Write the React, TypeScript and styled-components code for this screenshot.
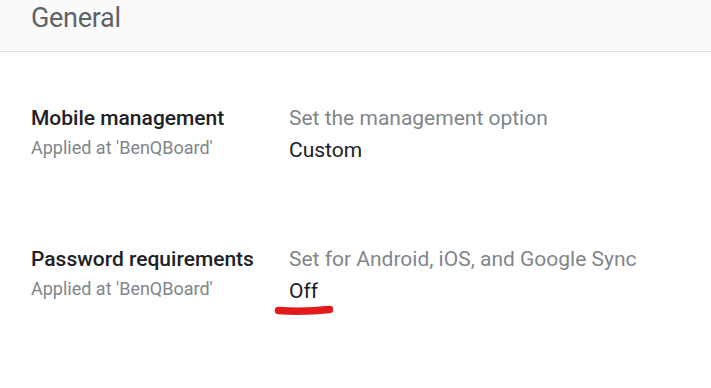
import React from 'react';
import styled, {createGlobalStyle} from 'styled-components';

const GlobalStyle = createGlobalStyle`
  html, body {
    margin: 0;
    padding: 0;
    background: #ffffff;
    font-family: Roboto, "Liberation Sans", Arial, sans-serif;
  }
`;

const Page = styled.div`
  width: 711px;
  height: 388px;
  overflow: hidden;
  background: #ffffff;
`;

const Header = styled.div`
  height: 52px;
  box-sizing: border-box;
  padding: 0 31px;
  background: #fafafa;
  border-bottom: 1px solid #e0e0e0;
`;

const HeaderTitle = styled.h1`
  margin: 0;
  padding-top: 2px;
  font-size: 27px;
  font-weight: 400;
  line-height: 32px;
  color: #5f6368;
  letter-spacing: -0.3px;
`;

const Settings = styled.div`
  display: flex;
  flex-direction: column;
  gap: 85px;
  padding: 54px 31px 0;
`;

const Row = styled.div`
  display: grid;
  grid-template-columns: 258px 1fr;
`;

const Label = styled.div`
  display: flex;
  flex-direction: column;
  gap: 8px;
`;

const Name = styled.div`
  font-size: 21px;
  font-weight: 500;
  line-height: 24px;
  color: #202124;
`;

const Scope = styled.div`
  font-size: 18px;
  line-height: 20px;
  color: #80868b;
`;

const Value = styled.div`
  display: flex;
  flex-direction: column;
  gap: 8px;
`;

const Hint = styled.div`
  font-size: 21px;
  line-height: 24px;
  color: #80868b;
`;

const Current = styled.div`
  position: relative;
  align-self: flex-start;
  font-size: 21px;
  line-height: 24px;
  color: #202124;
`;

const Scribble = styled.svg`
  position: absolute;
  left: -14px;
  top: 24px;
  width: 58px;
  height: 12px;
  overflow: visible;
`;

type Setting = {
  name: string;
  hint: string;
  value: string;
  marked?: boolean;
};

const settings: Setting[] = [
  {name: 'Mobile management', hint: 'Set the management option', value: 'Custom'},
  {name: 'Password requirements', hint: 'Set for Android, iOS, and Google Sync', value: 'Off', marked: true},
];

const App = () => (
  <>
    <GlobalStyle />
    <Page>
      <Header>
        <HeaderTitle>General</HeaderTitle>
      </Header>
      <Settings>
        {settings.map((s) => (
          <Row key={s.name}>
            <Label>
              <Name>{s.name}</Name>
              <Scope>Applied at 'BenQBoard'</Scope>
            </Label>
            <Value>
              <Hint>{s.hint}</Hint>
              <Current>
                {s.value}
                {s.marked && (
                  <Scribble viewBox="0 0 58 12">
                    <path d="M3.5 7.5 C 18 8.5, 40 8, 54.5 6.5" stroke="#e3191c" strokeWidth="7.5" strokeLinecap="round" fill="none" />
                  </Scribble>
                )}
              </Current>
            </Value>
          </Row>
        ))}
      </Settings>
    </Page>
  </>
);

export default App;
